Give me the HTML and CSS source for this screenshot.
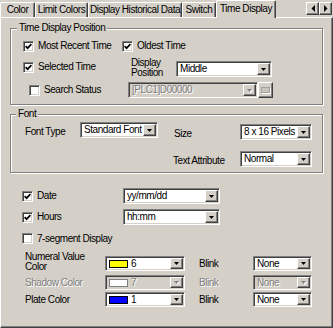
FILE: index.html
```html
<!DOCTYPE html>
<html>
<head>
<meta charset="utf-8">
<link rel="stylesheet" href="styles.css">
</head>
<body>
<div class="win">
  <div class="tabs">
    <div class="tab w1">Color</div>
    <div class="tab w2">Limit Colors</div>
    <div class="tab w3">Display Historical Data</div>
    <div class="tab w4">Switch</div>
    <div class="tab active w5">Time Display</div>
    <div class="tabarrows">
      <div class="abtn"><svg width="4" height="7" viewBox="0 0 4 7"><polygon points="4,0 4,7 0.5,3.5"/></svg></div>
      <div class="abtn"><svg width="4" height="7" viewBox="0 0 4 7"><polygon points="0,0 0,7 3.5,3.5"/></svg></div>
    </div>
  </div>
  <div class="panel">
    <div class="group g1">
      <div class="legend">Time Display Position</div>
      <div class="row r1">
        <div class="chk wa"><span class="cb"><svg width="7" height="7" viewBox="0 0 7 7"><path d="M0.6 3.2 L2.6 5.2 L6.4 1.2" fill="none" stroke="#000" stroke-width="1.7"/></svg></span>Most Recent Time</div>
        <div class="chk"><span class="cb"><svg width="7" height="7" viewBox="0 0 7 7"><path d="M0.6 3.2 L2.6 5.2 L6.4 1.2" fill="none" stroke="#000" stroke-width="1.7"/></svg></span>Oldest Time</div>
      </div>
      <div class="row r2">
        <div class="chk wb nudge1"><span class="cb"><svg width="7" height="7" viewBox="0 0 7 7"><path d="M0.6 3.2 L2.6 5.2 L6.4 1.2" fill="none" stroke="#000" stroke-width="1.7"/></svg></span>Selected Time</div>
        <div class="lbl2 wdp">Display<br>Position</div>
        <div class="sel wmid nudge3"><div class="v">Middle</div><div class="b"><svg width="5" height="3" viewBox="0 0 5 3"><polygon points="0,0 5,0 2.5,3"/></svg></div></div>
      </div>
      <div class="row r3">
        <div class="chk wc"><span class="cb"></span>Search Status</div>
        <div class="sel dis wplc"><div class="v">[PLC1]D00000</div><div class="b"><svg width="5" height="3" viewBox="0 0 5 3"><polygon points="0,0 5,0 2.5,3"/></svg></div></div>
        <div class="kbtn"><span class="kico"></span></div>
      </div>
    </div>

    <div class="group g2">
      <div class="legend lf">Font</div>
      <div class="row ra">
        <div class="lbl wft m2">Font Type</div>
        <div class="sel wstd"><div class="v">Standard Font</div><div class="b"><svg width="5" height="3" viewBox="0 0 5 3"><polygon points="0,0 5,0 2.5,3"/></svg></div></div>
        <div class="lbl wsz m4">Size</div>
        <div class="sel wpx m2"><div class="v">8 x 16 Pixels</div><div class="b"><svg width="5" height="3" viewBox="0 0 5 3"><polygon points="0,0 5,0 2.5,3"/></svg></div></div>
      </div>
      <div class="row rb">
        <div class="lbl wta m2">Text Attribute</div>
        <div class="sel wpx"><div class="v">Normal</div><div class="b"><svg width="5" height="3" viewBox="0 0 5 3"><polygon points="0,0 5,0 2.5,3"/></svg></div></div>
      </div>
    </div>

    <div class="row line rdate">
      <div class="chk wd"><span class="cb"><svg width="7" height="7" viewBox="0 0 7 7"><path d="M0.6 3.2 L2.6 5.2 L6.4 1.2" fill="none" stroke="#000" stroke-width="1.7"/></svg></span>Date</div>
      <div class="sel wdt"><div class="v">yy/mm/dd</div><div class="b"><svg width="5" height="3" viewBox="0 0 5 3"><polygon points="0,0 5,0 2.5,3"/></svg></div></div>
    </div>
    <div class="row line rhours">
      <div class="chk wd"><span class="cb"><svg width="7" height="7" viewBox="0 0 7 7"><path d="M0.6 3.2 L2.6 5.2 L6.4 1.2" fill="none" stroke="#000" stroke-width="1.7"/></svg></span>Hours</div>
      <div class="sel wdt"><div class="v">hh:mm</div><div class="b"><svg width="5" height="3" viewBox="0 0 5 3"><polygon points="0,0 5,0 2.5,3"/></svg></div></div>
    </div>
    <div class="row line rseg">
      <div class="chk"><span class="cb"></span>7-segment Display</div>
    </div>

    <div class="row crow rnum">
      <div class="lbl2 wcl">Numeral Value<br>Color</div>
      <div class="sel csel m4"><div class="v"><span class="sw yel"></span>6</div><div class="b"><svg width="5" height="3" viewBox="0 0 5 3"><polygon points="0,0 5,0 2.5,3"/></svg></div></div>
      <div class="lbl wbl m4">Blink</div>
      <div class="sel nsel m4"><div class="v">None</div><div class="b"><svg width="5" height="3" viewBox="0 0 5 3"><polygon points="0,0 5,0 2.5,3"/></svg></div></div>
    </div>
    <div class="row crow rshadow">
      <div class="lbl wcl dtext">Shadow Color</div>
      <div class="sel dis csel"><div class="v"><span class="sw wht"></span>7</div><div class="b"><svg width="5" height="3" viewBox="0 0 5 3"><polygon points="0,0 5,0 2.5,3"/></svg></div></div>
      <div class="lbl wbl dtext">Blink</div>
      <div class="sel dis nsel"><div class="v">None</div><div class="b"><svg width="5" height="3" viewBox="0 0 5 3"><polygon points="0,0 5,0 2.5,3"/></svg></div></div>
    </div>
    <div class="row crow rplate">
      <div class="lbl wcl">Plate Color</div>
      <div class="sel csel"><div class="v"><span class="sw blu"></span>1</div><div class="b"><svg width="5" height="3" viewBox="0 0 5 3"><polygon points="0,0 5,0 2.5,3"/></svg></div></div>
      <div class="lbl wbl">Blink</div>
      <div class="sel nsel"><div class="v">None</div><div class="b"><svg width="5" height="3" viewBox="0 0 5 3"><polygon points="0,0 5,0 2.5,3"/></svg></div></div>
    </div>
  </div>
</div>
</body>
</html>
```

FILE: styles.css
```css
* { box-sizing: border-box; }
body { margin: 0; background: #d4d0c8; }
.win {
  width: 333px; height: 328px; background: #d4d0c8; overflow: hidden;
  font-family: "Liberation Sans", Arial, sans-serif;
  font-size: 10px; letter-spacing: -0.45px; color: #000;
}
/* tabs */
.tabs { display: flex; height: 17px; align-items: flex-end; }
.tab {
  height: 15px; line-height: 14px; text-align: center; white-space: nowrap;
  border-top: 1px solid #fff; border-left: 1px solid #fff; border-right: 1px solid #404040;
  box-shadow: inset -1px 0 0 #808080; border-radius: 2px 2px 0 0; background: #d4d0c8;
}
.tab.active { height: 18px; margin-bottom: -1px; line-height: 16px; position: relative; z-index: 1; }
.w1 { width: 35px; } .w2 { width: 53px; } .w3 { width: 94px; } .w4 { width: 34px; } .w5 { width: 60px; }
.tabarrows { margin-left: auto; margin-right: 1px; align-self: flex-start; margin-top: 2px; display: flex; }
.abtn {
  width: 13px; height: 13px; display: flex; align-items: center; justify-content: center;
  border: 1px solid; border-color: #fff #404040 #404040 #fff; box-shadow: inset -1px -1px 0 #808080;
}
.abtn svg { fill: #000; }
/* panel */
.panel {
  height: 311px; display: flex; flex-direction: column; padding-top: 10px;
  border-top: 1px solid #fff; border-left: 1px solid #fff;
  border-right: 1px solid #404040; border-bottom: 1px solid #404040;
  box-shadow: inset -1px -1px 0 #808080;
}
.group {
  position: relative; margin-left: 9px; width: 313px; display: flex; flex-direction: column;
  border: 1px solid #808080; box-shadow: inset 1px 1px 0 #fff, 1px 1px 0 #fff;
}
.g1 { padding: 9px 0 6px 12px; gap: 4px; }
.g2 { margin-top: 9px; padding: 7px 0 5px 14px; gap: 11px; }
.legend { position: absolute; top: -7px; left: 6px; padding: 0 2px; background: #d4d0c8; line-height: 12px; white-space: nowrap; }
.legend.lf { left: 5px; }
.row { display: flex; align-items: flex-start; }
.r1 { height: 16px; align-items: center; }
.r2 { height: 20px; }
.r3 { height: 16px; align-items: center; }
.ra { height: 18px; }
.rb { height: 16px; }
/* checkbox */
.chk { display: flex; align-items: center; gap: 4px; height: 16px; white-space: nowrap; line-height: 16px; }
.cb {
  width: 11px; height: 11px; flex: none; background: #fff; display: flex; align-items: center; justify-content: center;
  border: 1px solid; border-color: #808080 #fff #fff #808080;
  box-shadow: inset 1px 1px 0 #404040, inset -1px -1px 0 #d4d0c8;
}
.wa { width: 99px; }
.wb { width: 108px; }
.wc { width: 99px; margin-left: 6px; }
.nudge1 { margin-top: 1px; }
.nudge3 { margin-top: 3px; }
.m2 { margin-top: 2px; }
.m4 { margin-top: 4px; }
.lbl { line-height: 16px; white-space: nowrap; }
.lbl2 { line-height: 10px; white-space: nowrap; }
.wdp { width: 45px; }
/* select */
.sel {
  display: flex; height: 16px; background: #fff; padding: 1px; flex: none;
  border: 1px solid; border-color: #808080 #fff #fff #808080;
  box-shadow: inset 1px 1px 0 #404040, inset -1px -1px 0 #d4d0c8;
}
.sel .v { flex: 1; line-height: 12px; padding-left: 2px; white-space: nowrap; overflow: hidden; display: flex; align-items: center; }
.sel .b {
  width: 13px; flex: none; background: #d4d0c8; display: flex; align-items: center; justify-content: center;
  border: 1px solid; border-color: #fff #404040 #404040 #fff; box-shadow: inset -1px -1px 0 #808080;
}
.sel .b svg { fill: #000; }
.sel.dis { background: #d4d0c8; }
.sel.dis .v, .dtext { color: #808080; text-shadow: 1px 1px 0 #fff; }
.sel.dis .b svg { fill: #808080; filter: drop-shadow(1px 1px 0 #fff); }
.wmid { width: 96px; }
.wplc { width: 130px; }
.kbtn {
  width: 15px; height: 16px; display: flex; align-items: center; justify-content: center;
  border: 1px solid; border-color: #fff #404040 #404040 #fff; box-shadow: inset -1px -1px 0 #808080; background: #d4d0c8;
}
.kico { width: 9px; height: 6px; border: 1px solid #a0a0a0; background: #c8c4bc; box-shadow: 1px 1px 0 #fff; }
.wft { width: 55px; }
.wstd { width: 78px; }
.wsz { width: 66px; margin-left: 16px; }
.wpx { width: 72px; }
.wta { width: 67px; margin-left: 148px; }
/* lower rows */
.line { padding-left: 21px; height: 16px; align-items: center; }
.rdate { margin-top: 15px; }
.rhours { margin-top: 5px; }
.rseg { margin-top: 5px; height: 17px; }
.wd { width: 101px; }
.wdt { width: 97px; }
.crow { padding-left: 24px; }
.rnum { margin-top: 5px; height: 20px; }
.rshadow { margin-top: 3px; height: 15px; align-items: center; }
.rplate { margin-top: 2px; height: 15px; align-items: center; }
.crow .lbl { line-height: 15px; }
.wcl { width: 80px; }
.csel { width: 80px; height: 15px; }
.nsel { width: 59px; height: 15px; }
.csel .v, .nsel .v { line-height: 11px; }
.wbl { width: 54px; margin-left: 14px; }
.sw { width: 19px; height: 8px; border: 1px solid #000; margin-right: 3px; flex: none; }
.sw.yel { background: #ffff00; }
.sw.wht { background: #fff; border-color: #808080; }
.sw.blu { background: #0000ff; }
```
